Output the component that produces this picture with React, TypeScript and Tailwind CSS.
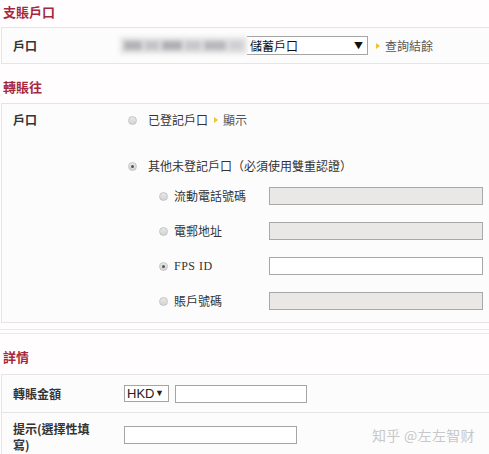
const cjk = { fontFamily: '"Noto Sans CJK TC", "Noto Sans", sans-serif' };

function Arrow() {
  return (
    <span className="inline-block w-0 h-0 border-y-[3px] border-l-[4px] border-y-transparent border-l-[#f2c22e] mr-[5px]" />
  );
}

function Radio({ checked }: { checked?: boolean }) {
  return (
    <span className="w-[9px] h-[9px] rounded-full border border-[#c4c4c4] bg-gradient-to-b from-[#e8e8e8] to-[#d4d4d4] flex items-center justify-center shrink-0">
      {checked && <span className="w-[3px] h-[3px] rounded-full bg-[#555]" />}
    </span>
  );
}

function Heading({ children }: { children: string }) {
  return <div className="pl-[3px] text-[13px] font-bold text-[#a5283d] leading-none">{children}</div>;
}

function SubRow({ label, checked, grey, serif }: { label: string; checked?: boolean; grey?: boolean; serif?: boolean }) {
  return (
    <div className="flex items-center h-[20px]">
      <div className="flex items-center w-[141px] pl-[31px]">
        <Radio checked={checked} />
        <span
          className="ml-[6px] text-[12px] text-[#333]"
          style={serif ? { fontFamily: '"Liberation Serif", serif', letterSpacing: '0.5px' } : undefined}
        >
          {label}
        </span>
      </div>
      <div className={`w-[214px] h-[18px] border border-[#a8a8a8] ${grey ? 'bg-[#e9e8e6]' : 'bg-white'}`} />
    </div>
  );
}

export default function App() {
  return (
    <div className="w-[489px] h-[454px] overflow-hidden bg-[#fffdfd] relative" style={cjk}>
      {/* 支賬戶口 */}
      <div className="pt-[5px] h-[27px]">
        <Heading>支賬戶口</Heading>
      </div>
      <div className="ml-[1px] h-[37px] border border-r-0 border-[#e6e4e4] bg-[#fdfcfc] flex items-center">
        <div className="w-[118px] pl-[11px] text-[12px] font-bold text-[#333]">戶口</div>
        <div className="flex items-center h-[19px]">
          <div className="w-[127px] h-[17px] bg-[#e4e3e4] flex items-center gap-[3px] px-[4px] blur-[2px]">
            <span className="w-[18px] h-[9px] bg-[#b3b2b6]" />
            <span className="w-[14px] h-[9px] bg-[#c3c2c5]" />
            <span className="w-[20px] h-[9px] bg-[#afaeb3]" />
            <span className="w-[16px] h-[9px] bg-[#c8c7ca]" />
            <span className="w-[22px] h-[9px] bg-[#b8b7bc]" />
            <span className="w-[14px] h-[9px] bg-[#d0cfd2]" />
          </div>
          <div className="w-[121px] h-[19px] border border-l-0 border-[#a5a5a5] bg-white flex items-center justify-between pl-[3px] pr-[4px] text-[12px] text-[#111]">
            <span>儲蓄戶口</span>
            <span className="text-[9px]">▼</span>
          </div>
        </div>
        <div className="ml-[8px] flex items-center text-[12px] text-[#555]">
          <Arrow />
          查詢結餘
        </div>
      </div>

      {/* 轉賬往 */}
      <div className="h-[39px] flex items-center pt-[6px]">
        <Heading>轉賬往</Heading>
      </div>
      <div className="ml-[1px] border border-r-0 border-[#e6e4e4] bg-[#fdfcfc] flex pt-[6px] pb-[11px]">
        <div className="w-[126px] pl-[11px] h-[20px] flex items-center text-[12px] font-bold text-[#333]">戶口</div>
        <div className="flex flex-col">
          <div className="flex items-center h-[20px]">
            <Radio />
            <span className="ml-[11px] text-[12px] text-[#333]">已登記戶口</span>
            <span className="ml-[6px] flex items-center text-[12px] text-[#555]">
              <Arrow />
              顯示
            </span>
          </div>
          <div className="flex items-center h-[20px] mt-[26px]">
            <Radio checked />
            <span className="ml-[11px] text-[12px] text-[#333]">其他未登記戶口（必須使用雙重認證）</span>
          </div>
          <div className="flex flex-col gap-[15px] mt-[10px]">
            <SubRow label="流動電話號碼" grey />
            <SubRow label="電郵地址" grey />
            <SubRow label="FPS ID" checked serif />
            <SubRow label="賬戶號碼" grey />
          </div>
        </div>
      </div>
      <div className="mt-[6px] h-[5px] border-y border-[#ebe9e9]" />

      {/* 詳情 */}
      <div className="h-[40px] flex items-center pt-[4px]">
        <Heading>詳情</Heading>
      </div>
      <div className="ml-[1px] border-t border-l border-[#e6e4e4] bg-[#fdfcfc]">
        <div className="h-[38px] flex items-center border-b border-[#e6e4e4]">
          <div className="w-[122px] pl-[11px] text-[12px] font-bold text-[#333]">轉賬金額</div>
          <div
            className="w-[45px] h-[17px] border border-[#a5a5a5] bg-white flex items-center pl-[2px] text-[13px] text-[#222] overflow-hidden"
            style={{ fontFamily: '"Liberation Sans", sans-serif' }}
          >
            <span className="w-[27px] overflow-hidden whitespace-nowrap">HKD</span>
            <span className="text-[9px] ml-[1px]">▼</span>
          </div>
          <div className="ml-[6px] w-[132px] h-[18px] border border-[#a5a5a5] bg-white" />
        </div>
        <div className="h-[44px] flex items-start pt-[8px]">
          <div className="w-[122px] pl-[11px] text-[12px] font-bold text-[#333] leading-[16px] pr-[20px]">提示(選擇性填寫)</div>
          <div className="mt-[5px] w-[173px] h-[18px] border border-[#a5a5a5] bg-white" />
        </div>
      </div>

      <div
        className="absolute left-[372px] top-[425px] text-[14px] text-[#c8c8c8] tracking-[0.3px]"
        style={{ fontFamily: '"Noto Sans CJK SC", sans-serif' }}
      >
        知乎 @左左智财
      </div>
    </div>
  );
}
